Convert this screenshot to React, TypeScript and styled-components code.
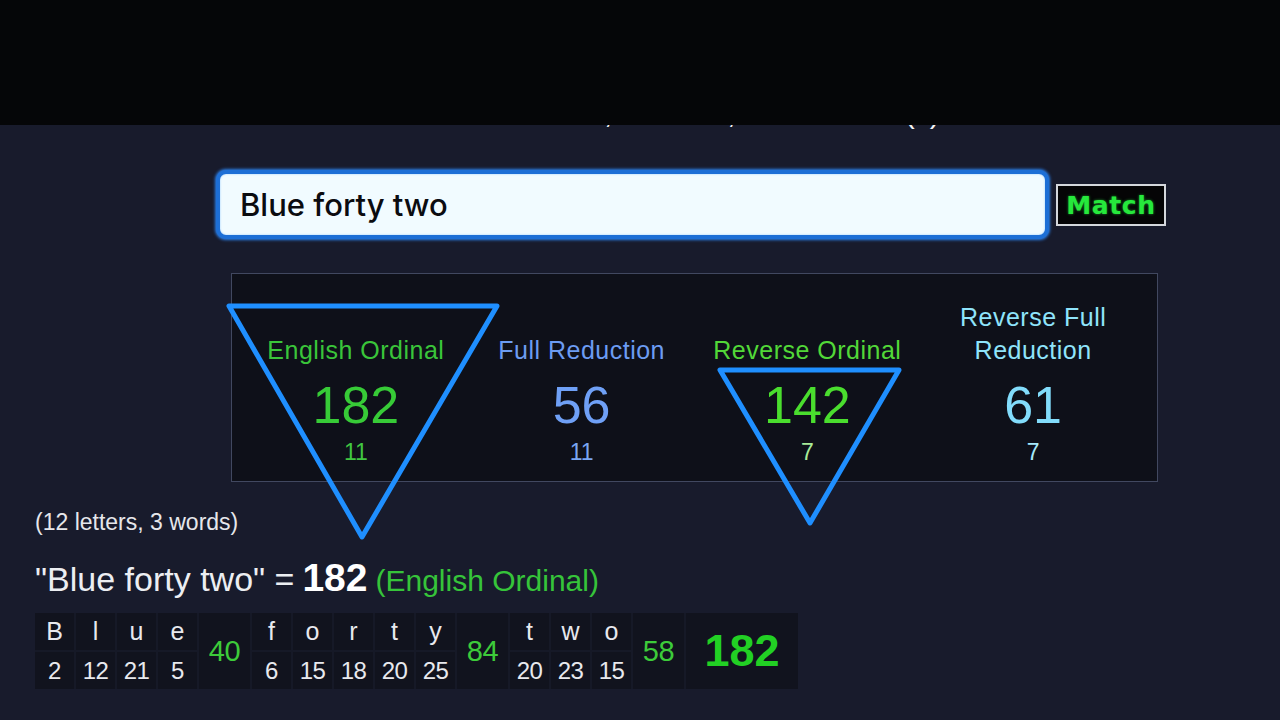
import React from "react";
import styled, { createGlobalStyle } from "styled-components";

const GlobalStyle = createGlobalStyle`
  html, body { margin: 0; padding: 0; background: #181b2c; }
  body { font-family: "Liberation Sans", Arial, sans-serif; }
  * { box-sizing: border-box; }
`;

const Page = styled.div`
  position: relative;
  width: 1280px;
  height: 720px;
  overflow: hidden;
  background: #181b2c;
`;

const TopBand = styled.div`
  height: 125px;
  background: #050608;
`;

const ClippedHeading = styled.div`
  height: 5px;
  overflow: hidden;
`;

const HeadingLine = styled.div`
  display: flex;
  margin-top: -27px;
  font-size: 30px;
  line-height: 30px;
  color: #f2f3f6;
  white-space: pre;
`;

const HeadingGlyph = styled.span<{ $offset: number }>`
  margin-left: ${(p) => p.$offset}px;
`;

const SearchRow = styled.div`
  display: flex;
  align-items: center;
  gap: 7px;
  margin-top: 40px;
  padding-left: 216px;
`;

const InputBox = styled.div`
  width: 833px;
  height: 69px;
  display: flex;
  align-items: center;
  padding-left: 20px;
  border: 4px solid #1d6fd6;
  border-radius: 10px;
  background: #f1fbff;
  box-shadow: 0 0 3px 1px #2b7fe8, inset 0 0 2px #8cc4ff;
  font-family: Inter, "Liberation Sans", sans-serif;
  font-weight: 500;
  font-size: 31px;
  color: #0b0c10;
`;

const MatchButton = styled.div`
  width: 110px;
  height: 42px;
  display: flex;
  align-items: center;
  justify-content: center;
  padding-top: 2px;
  background: #050506;
  border: 2px solid #d4d7dc;
  font-family: "DejaVu Sans", sans-serif;
  font-weight: 700;
  font-size: 25px;
  letter-spacing: 0.6px;
  color: #26e83c;
  text-shadow: 0 0 3px rgba(40, 255, 70, 0.55);
`;

const ResultsPanel = styled.div`
  width: 927px;
  height: 209px;
  margin: 34px 0 0 231px;
  padding: 27px 11px 0;
  display: grid;
  grid-template-columns: repeat(4, 1fr);
  background: #0e1019;
  border: 1px solid #414860;
`;

const ResultColumn = styled.div`
  display: flex;
  flex-direction: column;
  align-items: center;
  text-align: center;
`;

const ResultLabel = styled.div<{ $color: string }>`
  height: 66px;
  display: flex;
  flex-direction: column;
  justify-content: flex-end;
  font-size: 25px;
  line-height: 33px;
  letter-spacing: 0.5px;
  white-space: pre-line;
  color: ${(p) => p.$color};
`;

const ResultValue = styled.div<{ $color: string }>`
  margin-top: 12px;
  font-size: 52px;
  line-height: 52px;
  color: ${(p) => p.$color};
`;

const ResultSub = styled.div<{ $color: string }>`
  margin-top: 7px;
  font-size: 23px;
  line-height: 28px;
  color: ${(p) => p.$color};
`;

const Lower = styled.div`
  padding-left: 35px;
`;

const Counts = styled.div`
  margin-top: 28px;
  font-size: 23px;
  line-height: 24px;
  color: #e6e7eb;
`;

const Equation = styled.div`
  margin-top: 26px;
  display: flex;
  align-items: baseline;
  gap: 8px;
  font-size: 34px;
  line-height: 36px;
  color: #eceef2;
`;

const EqTotal = styled.span`
  font-weight: 700;
  font-size: 39px;
  color: #ffffff;
`;

const EqMethod = styled.span`
  font-size: 30px;
  color: #36c43a;
`;

const Breakdown = styled.div`
  margin-top: 14px;
  display: flex;
  gap: 2px;
  width: max-content;
  background: #161927;
`;

const LetterColumn = styled.div`
  display: flex;
  flex-direction: column;
  gap: 2px;
`;

const Cell = styled.div`
  display: flex;
  align-items: center;
  justify-content: center;
  background: #11131e;
`;

const LetterCell = styled(Cell)`
  width: 39px;
  height: 37px;
  font-size: 25px;
  color: #e8e9ee;
`;

const ValueCell = styled(Cell)`
  width: 39px;
  height: 37px;
  font-size: 24px;
  color: #e8e9ee;
  letter-spacing: -0.5px;
`;

const SumCell = styled(Cell)`
  width: 51px;
  height: 76px;
  font-size: 29px;
  color: #3dcb3a;
  letter-spacing: -0.5px;
`;

const TotalCell = styled(Cell)`
  width: 112px;
  height: 76px;
  font-size: 45px;
  font-weight: 700;
  color: #22d024;
`;

const Overlay = styled.svg`
  position: absolute;
  left: 0;
  top: 0;
  width: 1280px;
  height: 720px;
  pointer-events: none;
`;

const results = [
  { label: "English Ordinal", value: 182, sub: 11, label_c: "#3ac53a", value_c: "#37cb37", sub_c: "#41c741" },
  { label: "Full Reduction", value: 56, sub: 11, label_c: "#6c9cf2", value_c: "#6fa0f6", sub_c: "#7aa6f2" },
  { label: "Reverse Ordinal", value: 142, sub: 7, label_c: "#52d838", value_c: "#4ade2e", sub_c: "#a8eb98" },
  { label: "Reverse Full\nReduction", value: 61, sub: 7, label_c: "#8fe4fb", value_c: "#82dcfb", sub_c: "#a6e9fb" },
];

const words: { letters: [string, number][]; sum: number }[] = [
  { letters: [["B", 2], ["l", 12], ["u", 21], ["e", 5]], sum: 40 },
  { letters: [["f", 6], ["o", 15], ["r", 18], ["t", 20], ["y", 25]], sum: 84 },
  { letters: [["t", 20], ["w", 23], ["o", 15]], sum: 58 },
];

export default function App() {
  return (
    <Page>
      <GlobalStyle />
      <TopBand />
      <ClippedHeading>
        <HeadingLine>
          <HeadingGlyph $offset={604}>,</HeadingGlyph>
          <HeadingGlyph $offset={115}>,</HeadingGlyph>
          <HeadingGlyph $offset={169}>(</HeadingGlyph>
          <HeadingGlyph $offset={15}>)</HeadingGlyph>
        </HeadingLine>
      </ClippedHeading>

      <SearchRow>
        <InputBox>Blue forty two</InputBox>
        <MatchButton>Match</MatchButton>
      </SearchRow>

      <ResultsPanel>
        {results.map((r) => (
          <ResultColumn key={r.label}>
            <ResultLabel $color={r.label_c}>{r.label}</ResultLabel>
            <ResultValue $color={r.value_c}>{r.value}</ResultValue>
            <ResultSub $color={r.sub_c}>{r.sub}</ResultSub>
          </ResultColumn>
        ))}
      </ResultsPanel>

      <Lower>
        <Counts>(12 letters, 3 words)</Counts>
        <Equation>
          <span>"Blue forty two" =</span>
          <EqTotal>182</EqTotal>
          <EqMethod>(English Ordinal)</EqMethod>
        </Equation>
        <Breakdown>
          {words.map((w, wi) => (
            <React.Fragment key={wi}>
              {w.letters.map(([ch, v], li) => (
                <LetterColumn key={li}>
                  <LetterCell>{ch}</LetterCell>
                  <ValueCell>{v}</ValueCell>
                </LetterColumn>
              ))}
              <SumCell>{w.sum}</SumCell>
            </React.Fragment>
          ))}
          <TotalCell>182</TotalCell>
        </Breakdown>
      </Lower>

      <Overlay viewBox="0 0 1280 720">
        <polygon
          points="229,306 497,306 362,537"
          fill="none"
          stroke="#1f8fff"
          strokeWidth="5"
          strokeLinejoin="round"
        />
        <polygon
          points="720,370 899,370 810,523"
          fill="none"
          stroke="#1f8fff"
          strokeWidth="5"
          strokeLinejoin="round"
        />
      </Overlay>
    </Page>
  );
}
